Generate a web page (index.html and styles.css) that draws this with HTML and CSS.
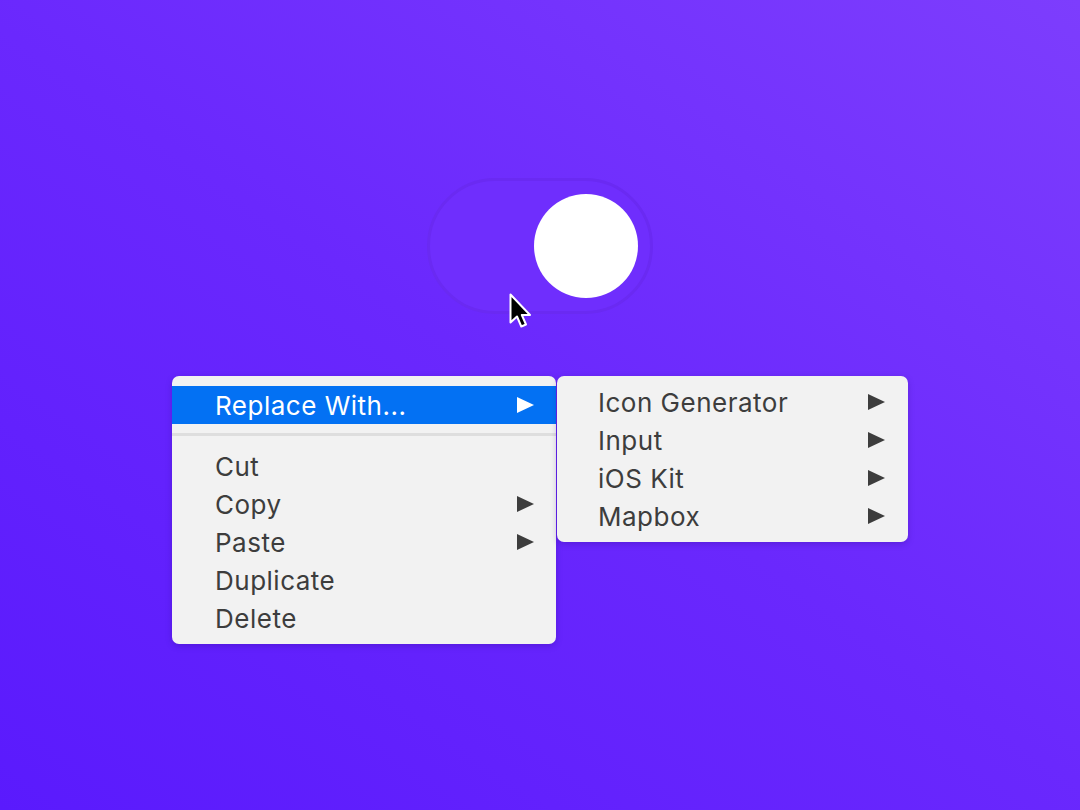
FILE: index.html
```html
<!DOCTYPE html>
<html lang="en">
<head>
    <meta charset="UTF-8">
    <title>Toggle context menu</title>
    <link rel="stylesheet" href="styles.css">
</head>
<body>
    <div class="stage">
        <div class="toggle">
            <div class="knob"></div>
        </div>

        <svg class="cursor" width="28" height="40" viewBox="0 0 28 40">
            <path d="M1.5 1.5 L1.5 29.5 L8 23.5 L12.3 33.5 L17 31.5 L12.8 22 L21 22 Z" fill="#000" stroke="#fff" stroke-width="2" stroke-linejoin="round"/>
        </svg>

        <div class="menu main-menu">
            <div class="item active">Replace With...<span class="arrow"></span></div>
            <div class="separator"></div>
            <div class="item">Cut</div>
            <div class="item">Copy<span class="arrow"></span></div>
            <div class="item">Paste<span class="arrow"></span></div>
            <div class="item">Duplicate</div>
            <div class="item">Delete</div>
        </div>

        <div class="menu sub-menu">
            <div class="item">Icon Generator<span class="arrow"></span></div>
            <div class="item">Input<span class="arrow"></span></div>
            <div class="item">iOS Kit<span class="arrow"></span></div>
            <div class="item">Mapbox<span class="arrow"></span></div>
        </div>
    </div>
</body>
</html>
```

FILE: styles.css
```css
html, body {
    margin: 0;
    padding: 0;
}
body {
    font-family: Inter, "Liberation Sans", Arial, sans-serif;
}
.stage {
    position: relative;
    width: 1080px;
    height: 810px;
    overflow: hidden;
    background: linear-gradient(35deg, #5a1afd 0%, #6a28fd 50%, #7d3dfd 100%);
    display: flex;
    justify-content: center;
    align-items: flex-start;
}
.toggle {
    margin-top: 178px;
    width: 226px;
    height: 136px;
    box-sizing: border-box;
    border-radius: 68px;
    background: #6f2efd;
    border: 3px solid #6a2af2;
    display: flex;
    align-items: center;
    justify-content: flex-end;
    padding-right: 12px;
}
.knob {
    width: 104px;
    height: 104px;
    border-radius: 50%;
    background: #fff;
}
.cursor {
    position: absolute;
    left: 509px;
    top: 293px;
}
.menu {
    position: absolute;
    background: #f2f2f2;
    border-radius: 7px;
    box-shadow: 0 2px 6px rgba(40, 0, 120, 0.25);
}
.main-menu {
    left: 172px;
    top: 376px;
    width: 384px;
    padding: 10px 0 7px;
}
.sub-menu {
    left: 557px;
    top: 376px;
    width: 351px;
    padding: 7px 0;
}
.item {
    height: 38px;
    display: flex;
    align-items: center;
    justify-content: space-between;
    padding: 0 22px 0 43px;
    font-size: 26px;
    color: #3d3d3d;
    letter-spacing: 0.5px;
}
.sub-menu .item {
    padding-left: 41px;
    padding-right: 23px;
}
.item.active {
    background: #0371f3;
    color: #fff;
}
.arrow {
    width: 0;
    height: 0;
    border-top: 8.5px solid transparent;
    border-bottom: 8.5px solid transparent;
    border-left: 17px solid #3d3d3d;
}
.item.active .arrow {
    border-left-color: #fff;
}
.separator {
    height: 23px;
    display: flex;
    align-items: center;
}
.separator::before {
    content: "";
    display: block;
    width: 100%;
    height: 3px;
    margin-top: -2px;
    background: #dedede;
}
```
